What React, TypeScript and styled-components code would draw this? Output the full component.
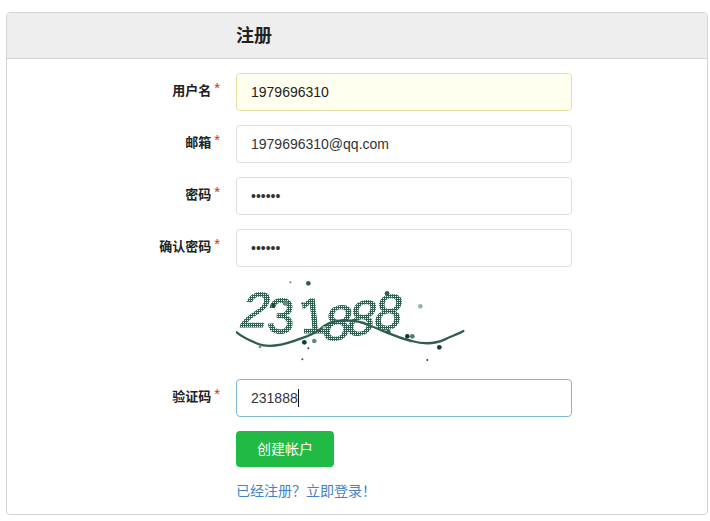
import React from 'react';
import styled, { createGlobalStyle } from 'styled-components';

const GlobalStyle = createGlobalStyle`
  html, body {
    margin: 0;
    background: #fff;
  }
  body {
    font-family: "Liberation Sans", "Noto Sans CJK SC", sans-serif;
    font-size: 14px;
    line-height: 20px;
    color: #212121;
  }
`;

const Page = styled.div`
  padding: 12px 2px 0 6px;
`;
const Card = styled.div`
  border: 1px solid #d4d4d5;
  border-radius: 4px;
  overflow: hidden;
`;
const CardHeader = styled.div`
  display: grid;
  grid-template-columns: 229px 1fr;
  height: 45px;
  align-items: center;
  background: #eee;
  border-bottom: 1px solid #d4d4d5;
`;
const Title = styled.h3`
  grid-column: 2;
  margin: 0;
  font-size: 18px;
  font-weight: 700;
  color: #212121;
`;
const Form = styled.form`
  display: grid;
  grid-template-columns: 229px 336px;
  row-gap: 14px;
  align-items: center;
  padding: 14px 0 13px;
`;
const Label = styled.label`
  justify-self: end;
  padding: 0 16px 3px 0;
  font-size: 13px;
  font-weight: 700;
  color: #212121;
`;
const Star = styled.span`
  position: relative;
  top: -2px;
  margin-left: 3px;
  color: #db2828;
  font-weight: 400;
  font-size: 15px;
`;
const FieldWrap = styled.div`
  position: relative;
  grid-column: 2;
  height: 38px;
`;
const Input = styled.input<{ $state?: 'autofill' | 'focus' }>`
  box-sizing: border-box;
  display: block;
  width: 100%;
  height: 38px;
  padding: 0 14px;
  font: inherit;
  color: ${(p) => (p.$state === 'autofill' ? '#212121' : '#333')};
  outline: none;
  caret-color: transparent;
  border-radius: 4px;
  border: 1px solid
    ${(p) => (p.$state === 'autofill' ? '#e5dfa0' : p.$state === 'focus' ? '#85b7d9' : '#dedede')};
  background: ${(p) => (p.$state === 'autofill' ? '#fffff0' : '#fff')};
`;
const Caret = styled.span`
  position: absolute;
  left: 62px;
  top: 10px;
  width: 1px;
  height: 18px;
  background: #111;
`;
const CaptchaCell = styled.div`
  grid-column: 2;
  height: 84px;
`;
const Submit = styled.button`
  grid-column: 2;
  justify-self: start;
  width: 98px;
  height: 36px;
  padding: 0;
  border: none;
  border-radius: 4px;
  background: #21ba45;
  color: #fff;
  font: inherit;
  cursor: pointer;
`;
const LoginLink = styled.a`
  grid-column: 2;
  color: #4183c4;
  text-decoration: none;
`;

const dots: [number, number, number, string][] = [
  [250, 40, 7, '#2f5d50'],
  [196, 37, 3, '#5f8a7c'],
  [145, 106, 7, '#1e4a3a'],
  [181, 99, 8, '#5f8a7c'],
  [586, 109, 7, '#8fb8a8'],
  [232, 100, 3, '#1e4a3a'],
  [297, 172, 4, '#8fb8a8'],
  [238, 217, 7, '#123d2f'],
  [268, 213, 7, '#5f8a7c'],
  [250, 235, 3, '#1e4a3a'],
  [232, 268, 3, '#2f5d50'],
  [607, 270, 3, '#1e4a3a'],
  [547, 199, 7, '#123d2f'],
  [562, 199, 7, '#4f7d6f'],
  [643, 232, 7, '#123d2f'],
  [490, 186, 7, '#2f5d50'],
  [486, 70, 7, '#2f5d50'],
  [105, 230, 4, '#5f8a7c'],
];

// char, x, baseline, skew
const digits: [string, number, number, number][] = [
  ['2', 38, 172, -15],
  ['3', 124, 188, -3],
  ['1', 228, 188, 6],
  ['8', 287, 211, -12],
  ['8', 357, 196, -15],
  ['8', 442, 176, -10],
];

// captcha picture, drawn in 3x coordinates
const Captcha = () => (
  <svg width="240" height="84" viewBox="33 33 720 252" style={{ display: 'block' }}>
    <defs>
      <pattern id="hatch" x="33" y="33" width="6" height="6" patternUnits="userSpaceOnUse">
        <path d="M0 0h6v3H3v3H0z" fill="#fff" />
      </pattern>
      <mask id="hatchMask" maskUnits="userSpaceOnUse" x="33" y="33" width="720" height="252">
        <rect x="33" y="33" width="720" height="252" fill="url(#hatch)" />
      </mask>
    </defs>
    <g mask="url(#hatchMask)">
      {digits.map(([ch, x, y, skew], i) => (
        <text
          key={i}
          transform={`translate(${x} ${y}) skewX(${skew})`}
          fontFamily='"Liberation Sans", sans-serif'
          fontSize="148"
          fill="#2f5d50"
          stroke="#2f5d50"
          strokeWidth="3"
        >
          {ch}
        </text>
      ))}
    </g>
    <path
      d="M35 187 C50 200 70 210 100 222 C130 234 170 226 210 212 C240 200 260 197 285 178 C305 160 320 155 345 152 C375 150 410 155 430 165 C470 180 520 205 560 213 C600 224 630 222 660 208 C680 198 700 192 715 183"
      fill="none"
      stroke="#2f5d50"
      strokeWidth="7"
      strokeLinecap="round"
    />
    {dots.map(([cx, cy, r, fill], i) => (
      <circle key={i} cx={cx} cy={cy} r={r} fill={fill} />
    ))}
  </svg>
);

const rows = [
  { id: 'username', label: '用户名', type: 'text', value: '1979696310', state: 'autofill' as const },
  { id: 'email', label: '邮箱', type: 'text', value: '1979696310@qq.com' },
  { id: 'password', label: '密码', type: 'password', value: '123456' },
  { id: 'confirm', label: '确认密码', type: 'password', value: '123456' },
];

const App: React.FC = () => {
  return (
    <Page>
      <GlobalStyle />
      <Card>
        <CardHeader>
          <Title>注册</Title>
        </CardHeader>
        <Form>
          {rows.map((r) => (
            <React.Fragment key={r.id}>
              <Label htmlFor={r.id}>
                {r.label}
                <Star>*</Star>
              </Label>
              <FieldWrap>
                <Input id={r.id} type={r.type} value={r.value} $state={r.state} readOnly />
              </FieldWrap>
            </React.Fragment>
          ))}
          <CaptchaCell>
            <Captcha />
          </CaptchaCell>
          <Label htmlFor="captcha">
            验证码
            <Star>*</Star>
          </Label>
          <FieldWrap>
            <Input id="captcha" type="text" value="231888" $state="focus" readOnly />
            <Caret />
          </FieldWrap>
          <Submit type="button">创建帐户</Submit>
          <LoginLink href="#">已经注册？立即登录！</LoginLink>
        </Form>
      </Card>
    </Page>
  );
};

export default App;
